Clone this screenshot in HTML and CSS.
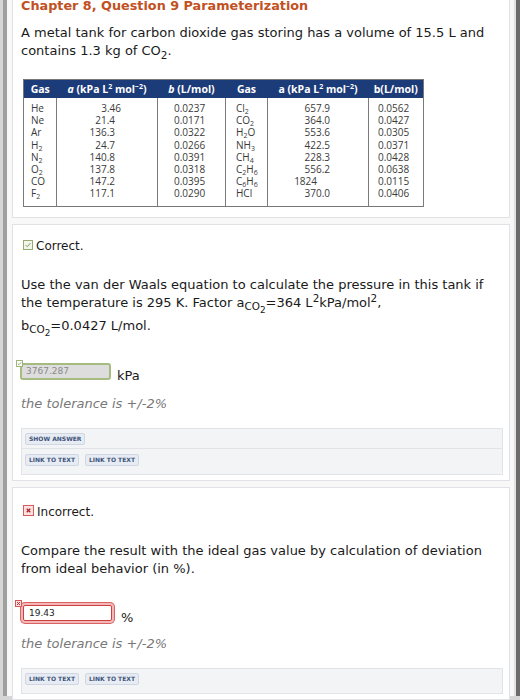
FILE: index.html
```html
<!DOCTYPE html>
<html>
<head>
<meta charset="utf-8">
<title>Chapter 8, Question 9 Parameterization</title>
<link rel="stylesheet" href="styles.css">
</head>
<body>
<div class="page">
  <section class="panel first">
    <h1 class="title">Chapter 8, Question 9 Parameterization</h1>
    <p class="q">A metal tank for carbon dioxide gas storing has a volume of 15.5 L and contains 1.3 kg of CO<sub>2</sub>.</p>
    <table class="vdw">
      <colgroup>
        <col class="c1"><col class="c2"><col class="c3"><col class="c4"><col class="c5"><col class="c6">
      </colgroup>
      <thead>
        <tr>
          <th>Gas</th>
          <th><i>a</i> (kPa L<sup>2</sup> mol<sup>&minus;2</sup>)</th>
          <th><i>b</i> (L/mol)</th>
          <th>Gas</th>
          <th>a (kPa L<sup>2</sup> mol<sup>&minus;2</sup>)</th>
          <th>b(L/mol)</th>
        </tr>
      </thead>
      <tbody>
        <tr class="top">
          <td class="g1">He</td><td class="a1 x2">3.46</td><td class="b1">0.0237</td>
          <td class="g2">Cl<sub>2</sub></td><td class="a2">657.9</td><td class="b2">0.0562</td>
        </tr>
        <tr>
          <td class="g1">Ne</td><td class="a1">21.4</td><td class="b1">0.0171</td>
          <td class="g2">CO<sub>2</sub></td><td class="a2">364.0</td><td class="b2">0.0427</td>
        </tr>
        <tr>
          <td class="g1">Ar</td><td class="a1">136.3</td><td class="b1">0.0322</td>
          <td class="g2">H<sub>2</sub>O</td><td class="a2">553.6</td><td class="b2">0.0305</td>
        </tr>
        <tr>
          <td class="g1">H<sub>2</sub></td><td class="a1">24.7</td><td class="b1">0.0266</td>
          <td class="g2">NH<sub>3</sub></td><td class="a2">422.5</td><td class="b2">0.0371</td>
        </tr>
        <tr>
          <td class="g1">N<sub>2</sub></td><td class="a1">140.8</td><td class="b1">0.0391</td>
          <td class="g2">CH<sub>4</sub></td><td class="a2">228.3</td><td class="b2">0.0428</td>
        </tr>
        <tr>
          <td class="g1">O<sub>2</sub></td><td class="a1">137.8</td><td class="b1">0.0318</td>
          <td class="g2">C<sub>2</sub>H<sub>6</sub></td><td class="a2">556.2</td><td class="b2">0.0638</td>
        </tr>
        <tr>
          <td class="g1">CO</td><td class="a1">147.2</td><td class="b1">0.0395</td>
          <td class="g2">C<sub>6</sub>H<sub>6</sub></td><td class="a2 int">1824</td><td class="b2">0.0115</td>
        </tr>
        <tr class="bottom">
          <td class="g1">F<sub>2</sub></td><td class="a1">117.1</td><td class="b1">0.0290</td>
          <td class="g2">HCl</td><td class="a2">370.0</td><td class="b2">0.0406</td>
        </tr>
      </tbody>
    </table>
  </section>

  <section class="panel">
    <div class="status">
      <svg class="ico" width="10" height="10" viewBox="0 0 10 10"><rect x="0.5" y="0.5" width="9" height="9" fill="#f2f6ea" stroke="#94aa6e"/><path d="M2.6 5.1 L4.2 6.7 L7.4 3.2" fill="none" stroke="#7d9a55" stroke-width="1"/></svg>
      <span>Correct.</span>
    </div>
    <p class="q">Use the van der Waals equation to calculate the pressure in this tank if the temperature is 295 K. Factor a<sub>CO<sub>2</sub></sub>=364 L<sup>2</sup>kPa/mol<sup>2</sup>,<span class="nextline">b<sub>CO<sub>2</sub></sub>=0.0427 L/mol.</span></p>
    <div class="answer">
      <span class="field ok">
        <span class="badge ok-badge"><svg width="7" height="7" viewBox="0 0 7 7"><rect x="0.5" y="0.5" width="6" height="6" fill="#ffffff" stroke="#9fb57a"/><path d="M1.8 3.6 L3 4.7 L5.2 2.3" fill="none" stroke="#6f8f45" stroke-width="0.8"/></svg></span>
        <span class="box ok-box">3767.287</span>
      </span>
      <span class="unit">kPa</span>
    </div>
    <p class="tol">the tolerance is +/-2%</p>
    <div class="tools">
      <div class="toolrow first-row"><span class="btn">SHOW ANSWER</span></div>
      <div class="toolrow"><span class="btn">LINK TO TEXT</span><span class="btn">LINK TO TEXT</span></div>
    </div>
  </section>

  <section class="panel wrong">
    <div class="status">
      <svg class="ico" width="11" height="11" viewBox="0 0 11 11"><rect x="0.5" y="0.5" width="10" height="10" fill="#fbe2e2" stroke="#dc5a5a"/><path d="M3.7 3.7 L7.3 7.3 M7.3 3.7 L3.7 7.3" stroke="#b32222" stroke-width="1.3"/></svg>
      <span>Incorrect.</span>
    </div>
    <p class="q">Compare the result with the ideal gas value by calculation of deviation from ideal behavior (in %).</p>
    <div class="answer">
      <span class="field bad">
        <span class="badge bad-badge"><svg width="7" height="7" viewBox="0 0 7 7"><rect x="0.5" y="0.5" width="6" height="6" fill="#fbe2e2" stroke="#d65555"/><path d="M2 2 L5 5 M5 2 L2 5" stroke="#b32222" stroke-width="0.9"/></svg></span>
        <span class="box bad-box">19.43</span>
      </span>
      <span class="unit">%</span>
    </div>
    <p class="tol">the tolerance is +/-2%</p>
    <div class="tools">
      <div class="toolrow"><span class="btn">LINK TO TEXT</span><span class="btn">LINK TO TEXT</span></div>
    </div>
  </section>
</div>
</body>
</html>
```

FILE: styles.css
```css
html, body {
  margin: 0;
  padding: 0;
}

body {
  background: #d6d6d6;
  height: 700px;
  overflow: hidden;
  font-family: "DejaVu Sans", Verdana, sans-serif;
  color: #1a1a1a;
}

.page {
  margin-left: 3px;
  border-left: 4px solid #a0a0a0;
  border-right: 4px solid #6c6c6c;
  background: #f8f8f9;
  box-shadow: inset -2px 0 0 #e2e2e4;
  height: 700px;
  padding: 0 6px 0 5px;
}

.panel {
  background: #ffffff;
  border: 1px solid #e1e2e6;
  padding: 12px 6px 5px 8px;
  margin-bottom: 6px;
}

.panel.first {
  margin-top: -4px;
  padding-top: 0;
  padding-bottom: 10px;
}

.panel.wrong {
  padding-top: 15px;
}

.title {
  margin: 0;
  font-size: 12.8px;
  line-height: 16px;
  font-weight: bold;
  color: #c1511f;
  padding-top: 1px;
}

.q {
  margin: 0;
  font-size: 13px;
  line-height: 18px;
}

.first .q {
  margin-top: 10px;
}

.status + .q {
  margin-top: 21px;
}

.q sub, .q sup {
  font-size: 0.8em;
  line-height: 0;
}

.q sub sub {
  font-size: 0.85em;
}

.nextline {
  display: block;
  margin-top: 5px;
}

.status {
  display: flex;
  align-items: center;
  font-size: 12px;
  line-height: 18px;
  padding-left: 2px;
}

.ico {
  display: block;
  margin-right: 3px;
  margin-top: -2px;
}

/* table */
.vdw {
  margin: 19px 0 0 2px;
  width: 400px;
  border-collapse: collapse;
  table-layout: fixed;
  font-family: "Open Sans", "DejaVu Sans", sans-serif;
  font-size: 10px;
  color: #3a3a3a;
  border: 1px solid #777777;
}

.c1 { width: 33px; }
.c2 { width: 101px; }
.c3 { width: 68px; }
.c4 { width: 42px; }
.c5 { width: 101px; }
.c6 { width: 55px; }

.vdw th {
  background: #1c3b79;
  color: #ffffff;
  font-weight: bold;
  font-size: 10.5px;
  height: 18px;
  line-height: 18px;
  padding: 0;
  text-align: center;
  white-space: nowrap;
}

.vdw th sup {
  font-size: 7px;
  line-height: 0;
  vertical-align: 4px;
}

.vdw td {
  padding: 0;
  line-height: 12.2px;
  height: 12.2px;
  border-left: 1px solid #7a7a7a;
  border-right: 1px solid #7a7a7a;
  white-space: nowrap;
}

.vdw tr.top td { padding-top: 4px; }
.vdw tr.bottom td { padding-bottom: 6px; }

.vdw td sub {
  font-size: 7px;
  line-height: 0;
  vertical-align: -2px;
}

.g1 { padding-left: 7px !important; }
.g2 { padding-left: 10px !important; }
.a1 { text-align: right; padding-right: 42px !important; }
.a1.x2 { padding-right: 36px !important; }
.b1 { padding-left: 16px !important; }
.a2 { text-align: right; padding-right: 38px !important; }
.a2.int { padding-right: 51px !important; }
.b2 { padding-left: 9px !important; }

/* answer */
.answer {
  display: flex;
  align-items: flex-start;
  height: 17px;
  margin-top: 28px;
}

.field {
  position: relative;
  display: block;
}

.field.ok { margin-left: -1px; }
.field.bad { margin-left: 2px; }

.box {
  display: block;
  box-sizing: border-box;
  font-size: 9px;
  padding-left: 4px;
}

.ok-box {
  width: 91px;
  height: 17px;
  line-height: 13px;
  border: 2px solid #a6bb80;
  border-radius: 3px;
  background: #dddddd;
  color: #8a8a8a;
}

.bad-box {
  width: 89px;
  height: 16px;
  line-height: 14px;
  padding-left: 5px;
  border: 1px solid #cf3f3f;
  border-radius: 2px;
  background: #ffffff;
  color: #222222;
  box-shadow: 0 0 0 2px #f4b7b7, 0 0 0 3px #d96262;
}

.badge {
  position: absolute;
  display: block;
  width: 7px;
  height: 7px;
  z-index: 2;
}

.badge svg { display: block; }

.ok-badge { left: -4px; top: -3px; }
.bad-badge { left: -8px; top: -5px; }

.unit {
  font-size: 13px;
  line-height: 17px;
  margin-top: 4px;
  margin-left: 6px;
}

.field.bad + .unit { margin-left: 9px; }

.tol {
  margin: 15px 0 0 0;
  font-size: 13px;
  line-height: 18px;
  font-style: italic;
  color: #777777;
}

.wrong .answer {
  margin-top: 27px;
}

.wrong .tol {
  margin-top: 13px;
}

/* tools */
.tools {
  margin-top: 15px;
  background: #f3f4f6;
  border: 1px solid #e1e3e7;
  padding: 4px 3px 8px 3px;
}

.wrong .tools {
  margin-top: 15px;
}

.toolrow {
  display: flex;
  gap: 6px;
}

.toolrow.first-row {
  padding-bottom: 3px;
  border-bottom: 1px solid #e1e3e7;
  margin: 0 -3px 5px -3px;
  padding-left: 3px;
}

.btn {
  display: block;
  font-size: 6px;
  font-weight: bold;
  line-height: 10px;
  color: #3e5479;
  background: #e7ecf4;
  border: 1px solid #d0d7e3;
  border-radius: 2px;
  padding: 0 3px;
  white-space: nowrap;
}
```
